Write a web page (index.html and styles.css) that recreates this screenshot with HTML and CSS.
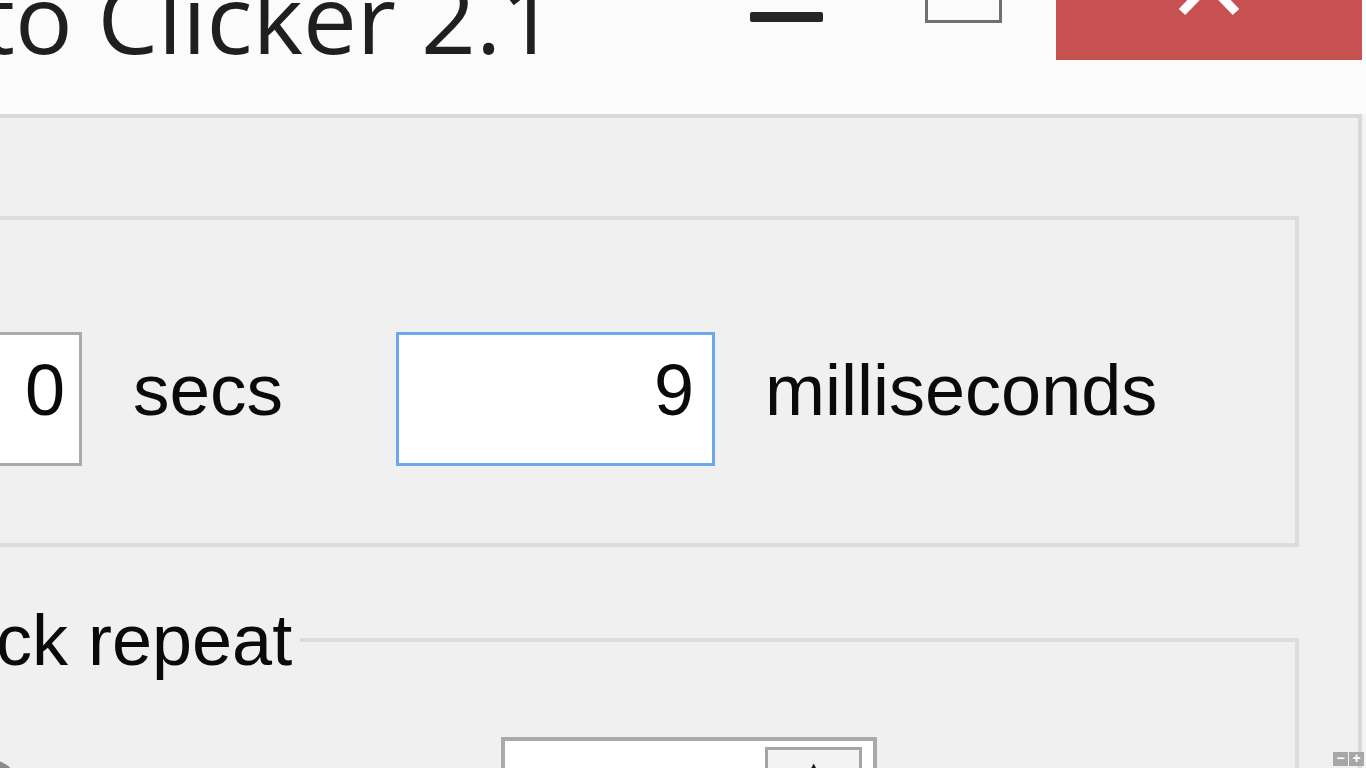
FILE: index.html
```html
<!DOCTYPE html>
<html>
  <head>
    <meta charset="utf-8" />
    <title>Auto Clicker 2.1</title>
    <link rel="stylesheet" href="styles.css">
  </head>
  <body>
    <!-- title bar -->
    <div class="titleBar">
      <div class="titleText"><span>Auto Clicker 2.1</span></div>
      <div class="captionButtons">
        <div class="capButton minButton"><span class="minGlyph"></span></div>
        <div class="capButton maxButton"><span class="maxGlyph"></span></div>
        <div class="capButton closeButton">
          <svg class="closeGlyph" width="70" height="60" viewBox="0 0 70 60">
            <path d="M8 -44 L62 12 M62 -44 L8 12" stroke="#ffffff" stroke-width="9" fill="none" />
          </svg>
        </div>
      </div>
    </div>

    <!-- client area -->
    <div class="clientArea">
      <div class="groupBox intervalGroup">
        <div class="intervalRow">
          <div class="numBox secsBox">0</div>
          <span class="unitLabel secsLabel">secs</span>
          <div class="numBox msBox focused">9</div>
          <span class="unitLabel msLabel">milliseconds</span>
        </div>
      </div>

      <fieldset class="groupBox repeatGroup">
        <legend>Click repeat</legend>
        <div class="repeatRow">
          <span class="radioButton"></span>
          <div class="spinBox">
            <div class="spinField"></div>
            <div class="spinButtons">
              <div class="spinUp">&#9650;</div>
            </div>
          </div>
        </div>
      </fieldset>
    </div>

    <div class="zoomBadge">
      <span class="zoomKey">&minus;</span>
      <span class="zoomKey">+</span>
    </div>
  </body>
</html>
```

FILE: styles.css
```css
html, body {
  margin: 0;
  padding: 0;
}
body {
  width: 1366px;
  height: 768px;
  overflow: hidden;
  background-color: #f4f4f4;
  font-family: "Liberation Sans", Arial, sans-serif;
  color: #0a0a0a;
  position: relative;
}

/* ---- title bar ---- */
div.titleBar {
  display: flex;
  align-items: flex-start;
  height: 114px;
  background-color: #fbfbfb;
  overflow: hidden;
}
div.titleText {
  display: flex;
  justify-content: flex-end;
  width: 556px;
  flex-shrink: 0;
  margin-top: -31px;
  font-family: "Open Sans", "Noto Sans", sans-serif;
  font-size: 96px;
  line-height: 96px;
  color: #1f1f1f;
  white-space: nowrap;
}
div.captionButtons {
  display: flex;
  align-items: flex-start;
  margin-left: 194px;
}
div.capButton {
  display: flex;
  justify-content: center;
}
div.minButton {
  width: 73px;
  height: 60px;
}
span.minGlyph {
  display: block;
  width: 73px;
  height: 10px;
  margin-top: 12px;
  border-radius: 2px;
  background-color: #262626;
}
div.maxButton {
  width: 77px;
  margin-left: 102px;
}
span.maxGlyph {
  display: block;
  width: 71px;
  height: 62px;
  margin-top: -45px;
  border: 3px solid #707070;
}
div.closeButton {
  width: 306px;
  height: 60px;
  margin-left: 54px;
  background-color: #c75050;
  align-items: flex-start;
}
svg.closeGlyph {
  display: block;
  overflow: visible;
}

/* ---- client area ---- */
div.clientArea {
  box-sizing: border-box;
  margin-left: -200px;
  margin-right: 4px;
  padding: 0 59px 0 40px;
  height: 654px;
  overflow: hidden;
  background-color: #f0f0f0;
  border-top: 4px solid #d9d9d9;
  border-right: 4px solid #d9d9d9;
}
.groupBox {
  border: 4px solid #dcdcdc;
  margin: 0;
  min-width: 0;
}
div.intervalGroup {
  margin-top: 98px;
  padding: 112px 0 77px 38px;
}
div.intervalRow {
  display: flex;
  align-items: baseline;
}
div.numBox {
  box-sizing: border-box;
  height: 134px;
  padding: 0 14px 18px 0;
  border: 3px solid #ababab;
  background-color: #ffffff;
  text-align: right;
  font-size: 72px;
  line-height: 110px;
}
div.secsBox {
  width: 200px;
}
div.msBox {
  width: 319px;
  margin-left: 113px;
  padding-right: 18px;
}
div.focused {
  border-color: #6fa8e8;
}
span.unitLabel {
  font-size: 73px;
  line-height: 110px;
}
span.secsLabel {
  margin-left: 51px;
}
span.msLabel {
  margin-left: 50px;
  font-size: 72px;
}

/* group with a caption */
fieldset.repeatGroup {
  margin-top: 52px;
  padding: 56px 0 0 60px;
  height: 300px;
}
fieldset.repeatGroup legend {
  padding: 0 8px;
  font-size: 72px;
  color: #0a0a0a;
}
div.repeatRow {
  display: flex;
  align-items: flex-start;
}
span.radioButton {
  display: block;
  box-sizing: border-box;
  width: 60px;
  height: 60px;
  margin-top: 23px;
  margin-left: 56px;
  border-radius: 50%;
  border: 6px solid #8a8a8a;
  background: linear-gradient(#e4e4e4, #f8f8f8);
}
div.spinBox {
  display: flex;
  box-sizing: border-box;
  width: 376px;
  height: 134px;
  margin-left: 481px;
  padding: 6px 11px 0 0;
  border: 4px solid #a9a9a9;
  background-color: #ffffff;
}
div.spinField {
  flex: 1;
}
div.spinButtons {
  width: 97px;
  box-sizing: border-box;
  border: 3px solid #a5a5a5;
  border-bottom: none;
  background-color: #f3f3f3;
  text-align: center;
  font-size: 30px;
  line-height: 30px;
  padding-top: 6px;
  color: #111111;
}

/* magnifier overlay in the corner */
div.zoomBadge {
  position: absolute;
  right: 2px;
  bottom: 2px;
  display: flex;
  gap: 1px;
}
span.zoomKey {
  display: block;
  width: 15px;
  height: 14px;
  background-color: #a7a7a7;
  color: #ffffff;
  font-size: 14px;
  font-weight: bold;
  line-height: 13px;
  text-align: center;
}
```
